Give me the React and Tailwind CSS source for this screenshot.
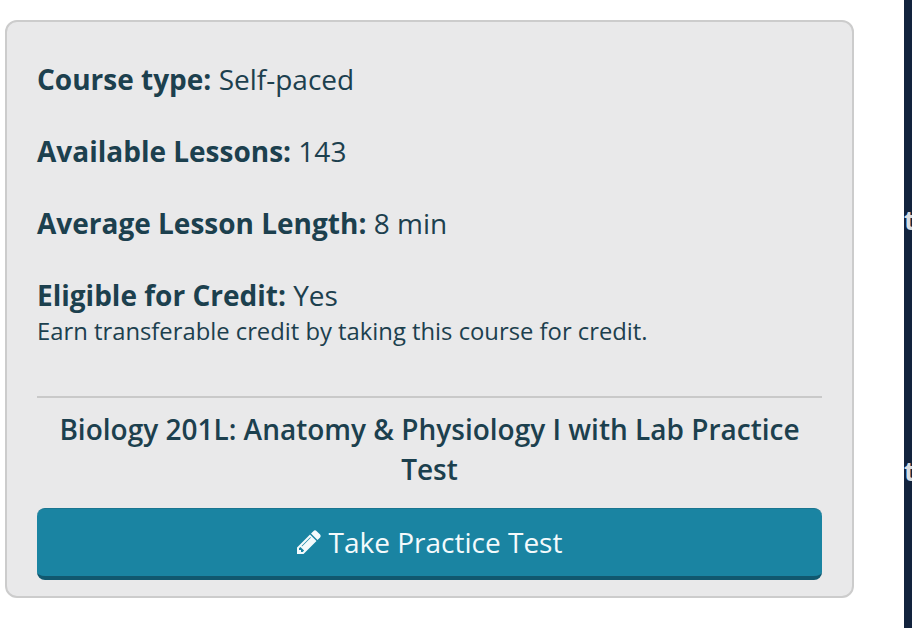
import React from 'react';

const facts = [
    { label: 'Course type:', value: 'Self-paced' },
    { label: 'Available Lessons:', value: '143' },
    { label: 'Average Lesson Length:', value: '8 min' },
    { label: 'Eligible for Credit:', value: 'Yes', note: 'Earn transferable credit by taking this course for credit.' }
];

const App = () => {
    return (
        <div className="flex h-[628px] w-[912px] overflow-hidden bg-white font-['Open_Sans',sans-serif] text-[#1c404e]">
            <div className="w-[904px] shrink-0 pl-[5px] pt-5">
                <div className="h-[578px] w-[849px] rounded-xl border-2 border-[#cccccc] bg-[#e9e9ea] px-[30px] pt-[39px]">
                    {facts.map((fact) => (
                        <div key={fact.label} className="mb-[36px] text-[28px] leading-9 last:mb-0">
                            <p>
                                <span className="font-bold">{fact.label}</span> {fact.value}
                            </p>
                            {fact.note && <p className="text-[23.8px] leading-[36px]">{fact.note}</p>}
                        </div>
                    ))}

                    <div className="mt-[47px] border-t-2 border-[#c9c9c9] pt-[11px] text-center text-[28px] font-semibold leading-10">
                        Biology 201L: Anatomy &amp; Physiology I with Lab Practice Test
                    </div>

                    <button className="mt-[19px] flex h-[72px] w-full items-center justify-center gap-2 rounded-lg border-t border-b-4 border-t-[#1a7590] border-b-[#11586f] bg-[#1a84a2] pb-[2px] text-[28px] text-[#f4fafc]">
                        <svg viewBox="128 128 1536 1536" className="h-6 w-6 fill-current">
                            <path d="M491 1536l91-91-235-235-91 91v107h128v128h107zm523-928q0-22-22-22-10 0-17 7l-542 542q-7 7-7 17 0 22 22 22 10 0 17-7l542-542q7-7 7-17zm-54-192l416 416-832 832h-416v-416zm683 96q0 53-37 90l-166 166-416-416 166-165q36-38 90-38 53 0 91 38l235 234q37 39 37 91z" />
                        </svg>
                        Take Practice Test
                    </button>
                </div>
            </div>

            <div className="w-2 shrink-0 bg-[#12233d] pt-[202px] text-[26px] font-bold leading-9 text-[#d9dde2]">
                <p>t</p>
                <p className="mt-[215px]">t</p>
            </div>
        </div>
    );
};

export default App;
